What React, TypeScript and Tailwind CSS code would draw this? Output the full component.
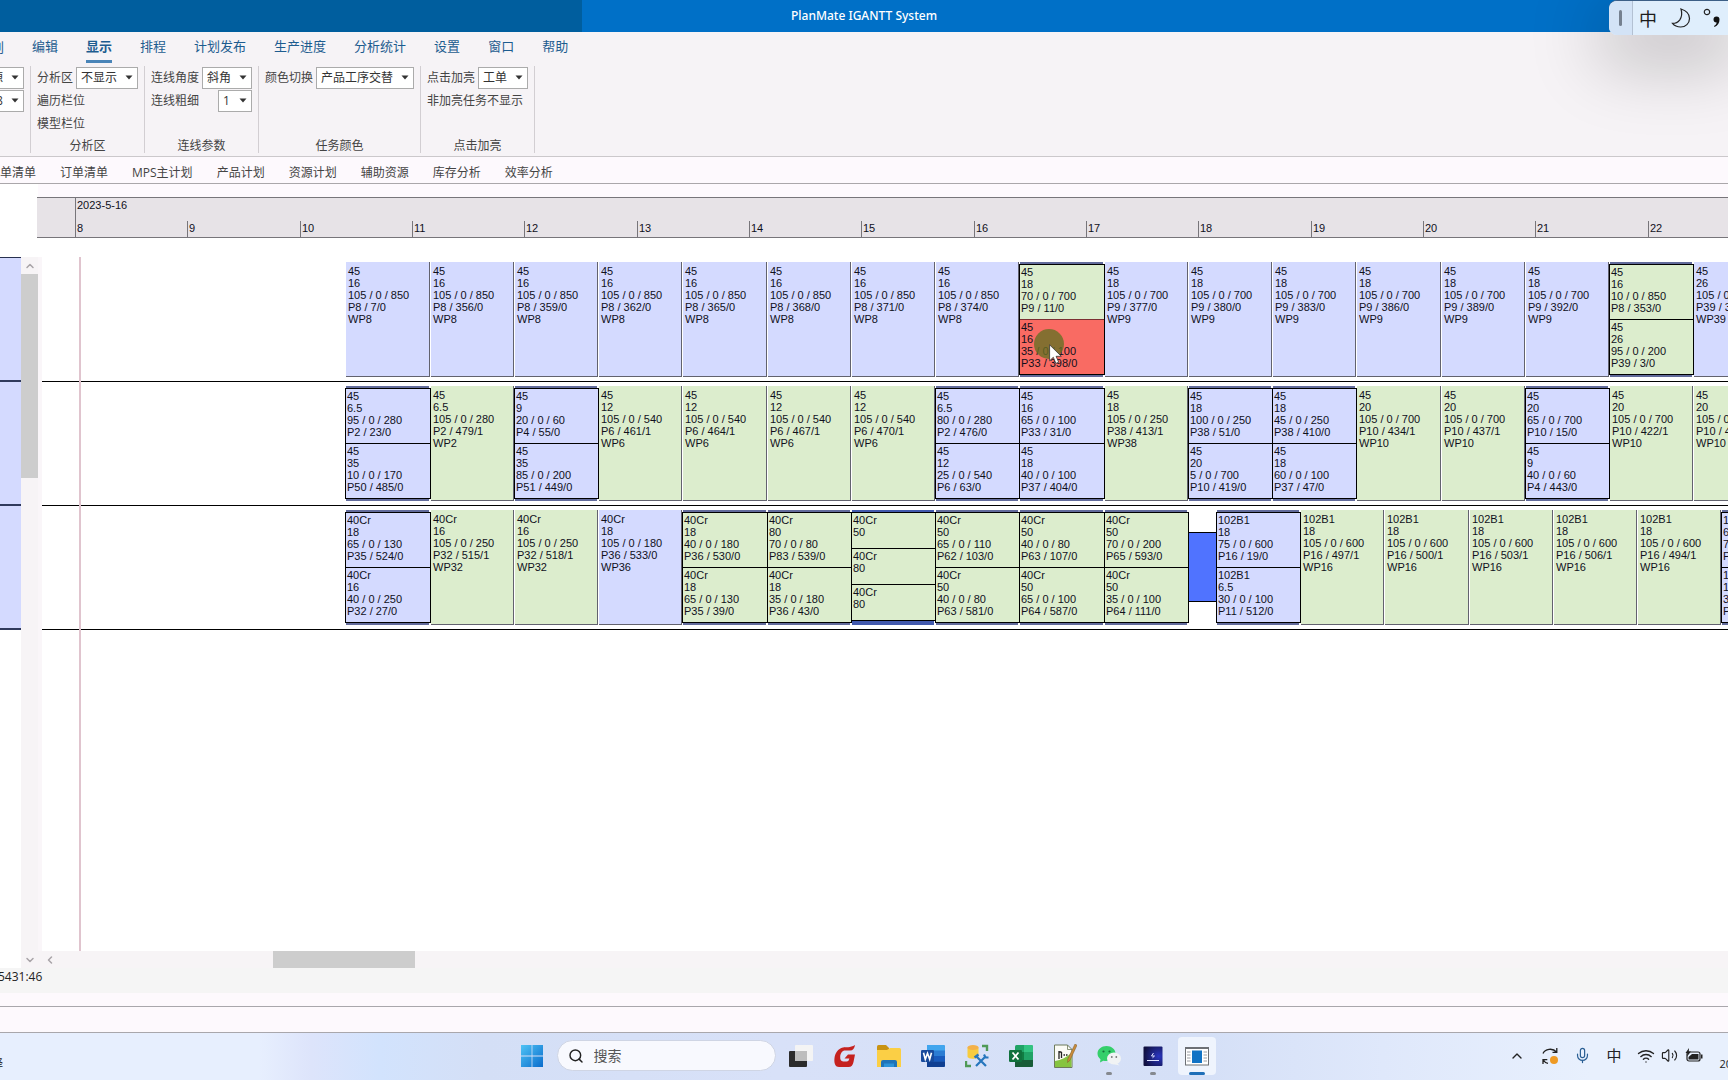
import type { ReactNode } from 'react'
import { ChevronDown, ChevronLeft, ChevronUp, Mic, Search, Volume2, Wifi } from 'lucide-react'

type Tone = 'blue' | 'green' | 'red'
type Lot = { tone: Tone; lines: string[] }
type Slot =
  | { kind: 'single'; lot: Lot }
  | { kind: 'stack'; lots: Lot[] }
  | { kind: 'idle' }

const HOUR_WIDTH = 112.33
const FIRST_TASK_X = 303.4
const SLOT_MINUTES = 45
const IDLE_MINUTES = 15

const toneClass: Record<Tone, string> = {
  blue: 'bg-[#d4daff]',
  green: 'bg-[#dcedcd]',
  red: 'bg-[#f96b63]',
}

const one = (tone: Tone, text: string): Slot => ({ kind: 'single', lot: { tone, lines: text.split('|') } })
const many = (tone: Tone, ...texts: string[]): Slot => ({
  kind: 'stack',
  lots: texts.map((text) => ({ tone, lines: text.split('|') })),
})

const rows: Slot[][] = [
  [
    one('blue', '45|16|105 / 0 / 850|P8 / 7/0|WP8'),
    one('blue', '45|16|105 / 0 / 850|P8 / 356/0|WP8'),
    one('blue', '45|16|105 / 0 / 850|P8 / 359/0|WP8'),
    one('blue', '45|16|105 / 0 / 850|P8 / 362/0|WP8'),
    one('blue', '45|16|105 / 0 / 850|P8 / 365/0|WP8'),
    one('blue', '45|16|105 / 0 / 850|P8 / 368/0|WP8'),
    one('blue', '45|16|105 / 0 / 850|P8 / 371/0|WP8'),
    one('blue', '45|16|105 / 0 / 850|P8 / 374/0|WP8'),
    {
      kind: 'stack',
      lots: [
        { tone: 'green', lines: ['45', '18', '70 / 0 / 700', 'P9 / 11/0'] },
        { tone: 'red', lines: ['45', '16', '35 / 0 / 100', 'P33 / 398/0'] },
      ],
    },
    one('blue', '45|18|105 / 0 / 700|P9 / 377/0|WP9'),
    one('blue', '45|18|105 / 0 / 700|P9 / 380/0|WP9'),
    one('blue', '45|18|105 / 0 / 700|P9 / 383/0|WP9'),
    one('blue', '45|18|105 / 0 / 700|P9 / 386/0|WP9'),
    one('blue', '45|18|105 / 0 / 700|P9 / 389/0|WP9'),
    one('blue', '45|18|105 / 0 / 700|P9 / 392/0|WP9'),
    many('green', '45|16|10 / 0 / 850|P8 / 353/0', '45|26|95 / 0 / 200|P39 / 3/0'),
    one('blue', '45|26|105 / 0 / 200|P39 / 395/0|WP39'),
  ],
  [
    many('blue', '45|6.5|95 / 0 / 280|P2 / 23/0', '45|35|10 / 0 / 170|P50 / 485/0'),
    one('green', '45|6.5|105 / 0 / 280|P2 / 479/1|WP2'),
    many('blue', '45|9|20 / 0 / 60|P4 / 55/0', '45|35|85 / 0 / 200|P51 / 449/0'),
    one('green', '45|12|105 / 0 / 540|P6 / 461/1|WP6'),
    one('green', '45|12|105 / 0 / 540|P6 / 464/1|WP6'),
    one('green', '45|12|105 / 0 / 540|P6 / 467/1|WP6'),
    one('green', '45|12|105 / 0 / 540|P6 / 470/1|WP6'),
    many('blue', '45|6.5|80 / 0 / 280|P2 / 476/0', '45|12|25 / 0 / 540|P6 / 63/0'),
    many('blue', '45|16|65 / 0 / 100|P33 / 31/0', '45|18|40 / 0 / 100|P37 / 404/0'),
    one('green', '45|18|105 / 0 / 250|P38 / 413/1|WP38'),
    many('blue', '45|18|100 / 0 / 250|P38 / 51/0', '45|20|5 / 0 / 700|P10 / 419/0'),
    many('blue', '45|18|45 / 0 / 250|P38 / 410/0', '45|18|60 / 0 / 100|P37 / 47/0'),
    one('green', '45|20|105 / 0 / 700|P10 / 434/1|WP10'),
    one('green', '45|20|105 / 0 / 700|P10 / 437/1|WP10'),
    many('blue', '45|20|65 / 0 / 700|P10 / 15/0', '45|9|40 / 0 / 60|P4 / 443/0'),
    one('green', '45|20|105 / 0 / 700|P10 / 422/1|WP10'),
    one('green', '45|20|105 / 0 / 700|P10 / 425/1|WP10'),
  ],
  [
    many('blue', '40Cr|18|65 / 0 / 130|P35 / 524/0', '40Cr|16|40 / 0 / 250|P32 / 27/0'),
    one('green', '40Cr|16|105 / 0 / 250|P32 / 515/1|WP32'),
    one('green', '40Cr|16|105 / 0 / 250|P32 / 518/1|WP32'),
    one('blue', '40Cr|18|105 / 0 / 180|P36 / 533/0|WP36'),
    many('green', '40Cr|18|40 / 0 / 180|P36 / 530/0', '40Cr|18|65 / 0 / 130|P35 / 39/0'),
    many('green', '40Cr|80|70 / 0 / 80|P83 / 539/0', '40Cr|18|35 / 0 / 180|P36 / 43/0'),
    many('green', '40Cr|50', '40Cr|80', '40Cr|80'),
    many('green', '40Cr|50|65 / 0 / 110|P62 / 103/0', '40Cr|50|40 / 0 / 80|P63 / 581/0'),
    many('green', '40Cr|50|40 / 0 / 80|P63 / 107/0', '40Cr|50|65 / 0 / 100|P64 / 587/0'),
    many('green', '40Cr|50|70 / 0 / 200|P65 / 593/0', '40Cr|50|35 / 0 / 100|P64 / 111/0'),
    { kind: 'idle' },
    many('blue', '102B1|18|75 / 0 / 600|P16 / 19/0', '102B1|6.5|30 / 0 / 100|P11 / 512/0'),
    one('green', '102B1|18|105 / 0 / 600|P16 / 497/1|WP16'),
    one('green', '102B1|18|105 / 0 / 600|P16 / 500/1|WP16'),
    one('green', '102B1|18|105 / 0 / 600|P16 / 503/1|WP16'),
    one('green', '102B1|18|105 / 0 / 600|P16 / 506/1|WP16'),
    one('green', '102B1|18|105 / 0 / 600|P16 / 494/1|WP16'),
    many('blue', '102B1|6.5|75 / 0 / 100|P11 / 509/0', '102B1|18|30 / 0 / 600|P16 / 491/0'),
  ],
]

const menuTabs = ['编辑', '显示', '排程', '计划发布', '生产进度', '分析统计', '设置', '窗口', '帮助']
const viewTabs = ['订单清单', 'MPS主计划', '产品计划', '资源计划', '辅助资源', '库存分析', '效率分析']
const hours = [8, 9, 10, 11, 12, 13, 14, 15, 16, 17, 18, 19, 20, 21, 22]

function Lines({ lines }: { lines: string[] }) {
  return (
    <>
      {lines.map((line, i) => (
        <div key={i} className="h-3 whitespace-nowrap">
          {line}
        </div>
      ))}
    </>
  )
}

function SlotView({ slot, width }: { slot: Slot; width: number }) {
  if (slot.kind === 'idle') {
    return (
      <div className="mt-[22px] h-[70px] shrink-0 border-y border-black bg-[#5073ff]" style={{ width }} />
    )
  }
  if (slot.kind === 'single') {
    return (
      <div className="h-[115px] shrink-0 pl-px" style={{ width }}>
        <div
          className={`h-full overflow-hidden border-r border-b border-[#62626e] pt-[3px] pl-0.5 ${toneClass[slot.lot.tone]}`}
        >
          <Lines lines={slot.lot.lines} />
        </div>
      </div>
    )
  }
  const dense = slot.lots.length > 2
  return (
    <div
      className={`h-[115px] shrink-0 border-x border-white ${dense ? 'bg-[#4259ad]' : 'bg-[#626b9b]'}`}
      style={{ width }}
    >
      <div className="relative z-10 -mr-0.5 -ml-px mt-0.5 border-x border-b border-black">
        {slot.lots.map((lot, i) => (
          <div
            key={i}
            className={`overflow-hidden border-t pt-px pl-px ${dense ? 'h-9' : 'h-[55px]'} ${
              lot.tone === 'red' ? 'border-[#7c2f33]' : 'border-black'
            } ${toneClass[lot.tone]}`}
          >
            <Lines lines={lot.lines} />
          </div>
        ))}
      </div>
    </div>
  )
}

function GanttRow({ slots }: { slots: Slot[] }) {
  let x = FIRST_TASK_X
  return (
    <div className="flex h-[124px] overflow-hidden border-b border-black pt-1">
      <div className="shrink-0" style={{ width: Math.round(x) }} />
      {slots.map((slot, i) => {
        const start = x
        x += ((slot.kind === 'idle' ? IDLE_MINUTES : SLOT_MINUTES) / 60) * HOUR_WIDTH
        return <SlotView key={i} slot={slot} width={Math.round(x) - Math.round(start)} />
      })}
    </div>
  )
}

function Combo({ id, value, className, label }: { id: string; value: string; className: string; label?: string }) {
  return (
    <span className={`flex h-[22px] shrink-0 items-center border border-[#ababab] bg-white ${className}`}>
      <select
        id={id}
        aria-label={label}
        defaultValue={value}
        className="h-full min-w-0 flex-1 appearance-none bg-transparent pl-1 text-[#333] outline-none"
      >
        <option>{value}</option>
      </select>
      <svg viewBox="0 0 8 5" className="mr-1 h-[5px] w-2 shrink-0" aria-hidden="true">
        <path d="M0.5 0.5h7L4 4.5z" fill="#333" />
      </svg>
    </span>
  )
}

function Group({ title, children }: { title: string; children: ReactNode }) {
  return (
    <section className="flex h-[87px] shrink-0 flex-col border-r border-[#d2ced2] px-1.5">
      {children}
      <h2 className="mt-auto h-[14px] text-center leading-[14px]">{title}</h2>
    </section>
  )
}

function Field({ id, text, value, className }: { id: string; text: string; value: string; className: string }) {
  return (
    <div className="flex h-[23px] items-center justify-between gap-[3px]">
      <label htmlFor={id}>{text}</label>
      <Combo id={id} value={value} className={className} />
    </div>
  )
}

function ToggleText({ text }: { text: string }) {
  return (
    <button type="button" className="flex h-[23px] items-center whitespace-nowrap">
      {text}
    </button>
  )
}

function Ribbon() {
  return (
    <header className="shrink-0 overflow-hidden border-b border-[#cbc8cb] bg-[#f6f3f6]">
      <nav className="flex h-[34px] items-start gap-7 text-[13px] text-[#1d5c8f]">
        <button type="button" className="-ml-[9px] h-[31px] shrink-0">
          划
        </button>
        {menuTabs.map((tab) => (
          <button
            key={tab}
            type="button"
            className={`h-[31px] shrink-0 border-b-[3px] pt-[2px] ${
              tab === '显示' ? 'border-[#4a85b8] font-bold' : 'border-transparent'
            }`}
          >
            {tab}
          </button>
        ))}
      </nav>
      <div className="flex h-[90px] text-xs text-[#444]">
        <div className="flex h-[87px] w-[31px] shrink-0 flex-col items-end overflow-hidden border-r border-[#d2ced2] pr-1.5">
          <div className="flex h-[23px] items-center">
            <Combo id="source" label="资源" value="资源" className="w-[50px]" />
          </div>
          <div className="flex h-[23px] items-center">
            <Combo id="count" label="数量" value="8" className="w-[33px]" />
          </div>
        </div>
        <Group title="分析区">
          <Field id="area" text="分析区" value="不显示" className="w-[62px]" />
          <ToggleText text="遍历栏位" />
          <ToggleText text="模型栏位" />
        </Group>
        <Group title="连线参数">
          <Field id="angle" text="连线角度" value="斜角" className="w-[50px]" />
          <Field id="weight" text="连线粗细" value="1" className="w-[34px]" />
        </Group>
        <Group title="任务颜色">
          <Field id="color" text="颜色切换" value="产品工序交替" className="w-[98px]" />
        </Group>
        <Group title="点击加亮">
          <Field id="highlight" text="点击加亮" value="工单" className="w-[50px]" />
          <ToggleText text="非加亮任务不显示" />
        </Group>
      </div>
    </header>
  )
}

function ResourceColumn() {
  return (
    <aside className="flex w-[38px] shrink-0 bg-white pt-[73px]">
      <div className="flex-1">
        <div className="border-t border-[#28304f]">
          {rows.map((_, i) => (
            <div key={i} className="h-[124px] border-b-2 border-[#303a5c] bg-[#d4daff]" />
          ))}
        </div>
      </div>
      <div className="flex w-[17px] flex-col bg-[#f7f4f6] text-[#a8a4a8]">
        <button type="button" aria-label="向上滚动" className="flex h-[17px] items-center justify-center">
          <ChevronUp size={12} strokeWidth={3} />
        </button>
        <div className="h-[204px] bg-[#cdcdcd]" />
        <button type="button" aria-label="向下滚动" className="mt-auto flex h-[17px] items-center justify-center">
          <ChevronDown size={12} strokeWidth={3} />
        </button>
      </div>
    </aside>
  )
}

function TimeScale() {
  return (
    <div className="-ml-px mt-[13px] flex h-[41px] shrink-0 overflow-hidden border-y border-[#77757a] bg-[#e7e3e7]">
      <div className="w-[38px] shrink-0" />
      {hours.map((hour, i) => (
        <div
          key={hour}
          className="flex shrink-0 flex-col justify-end"
          style={{ width: Math.round((i + 1) * HOUR_WIDTH) - Math.round(i * HOUR_WIDTH) }}
        >
          {i === 0 && (
            <div className="flex-1 border-l border-[#77757a] pt-px pl-px leading-3 whitespace-nowrap">2023-5-16</div>
          )}
          <div className="h-4 border-l border-[#77757a] pl-px leading-[14px]">{hour}</div>
        </div>
      ))}
    </div>
  )
}

function Chart() {
  return (
    <div className="flex min-w-0 flex-1 flex-col font-['Liberation_Sans',sans-serif] text-[11px] leading-3 text-[#10101c]">
      <TimeScale />
      <div className="flex min-h-0 flex-1 bg-white pt-[19px]">
        <div className="w-1 shrink-0 bg-[#faf6f9]" />
        <div className="relative flex min-w-0 flex-1 flex-col overflow-hidden pt-px">
          <div>
            {rows.map((slots, i) => (
              <GanttRow key={i} slots={slots} />
            ))}
          </div>
          <div className="absolute inset-y-0 left-[37px] w-0.5 bg-[#e0c4ce]" />
          <div className="absolute top-[72px] left-[992px] z-20 size-[30px] rounded-full bg-[#667024]/80" />
          <svg viewBox="0 0 14 22" className="absolute top-[87px] left-[1007px] z-20 h-[22px] w-[14px]" aria-hidden="true">
            <path d="M0.6 0.8v16l3.7-3.5 2.6 6.1 2.8-1.2-2.6-5.9h5.2z" fill="#fff" stroke="#333" strokeWidth="0.8" />
          </svg>
        </div>
      </div>
      <div className="flex h-[17px] shrink-0 items-center bg-[#f7f4f6] pl-1 text-[#a8a4a8]">
        <button type="button" aria-label="向左滚动" className="flex w-4 items-center justify-center">
          <ChevronLeft size={12} strokeWidth={3} />
        </button>
        <div className="ml-[215px] h-full w-[142px] bg-[#cdcdcd]" />
      </div>
    </div>
  )
}

function InputBar() {
  return (
    <div className="absolute top-0 right-0 z-30 flex h-[35px] w-[119px] items-center rounded-l-lg border-t border-[#3d5f86] bg-[#dfeefc] text-[#1c1c1c] shadow-[0_18px_70px_12px_rgba(0,0,0,0.22)]">
      <div className="flex h-full w-6 shrink-0 items-center justify-center rounded-l-lg border-r border-[#b3c1d3] bg-[#d3e3f6]">
        <span className="h-4 w-[3px] rounded-sm bg-[#75808f]" />
      </div>
      <button type="button" className="ml-[5px] w-5 pt-0.5 text-lg leading-none">
        中
      </button>
      <svg viewBox="0 0 20 20" className="ml-[13px] size-5 shrink-0" fill="none" stroke="#222" strokeWidth="1.2">
        <path d="M10 1c5 1.500 8.500 5 8.500 9.500 0 5-4 8.500-8.800 8.500-3.400 0-6.400-1.300-8.200-3.600 3 0 5.500-1.200 7.300-3.600C11 8.700 11 4.500 10 1z" />
      </svg>
      <svg viewBox="0 0 18 20" className="ml-3 h-5 w-[18px] shrink-0">
        <circle cx="4" cy="4" r="2.700" fill="none" stroke="#222" strokeWidth="1.200" />
        <path d="M10.500 11.500a3 3 0 1 1 6 0c0 3.500-1.700 6.300-5 7.500l-.5-1c1.700-.9 2.500-2 2.700-3.500-1.800.2-3.200-1.200-3.200-3z" fill="#111" />
      </svg>
    </div>
  )
}

function AppIcon({ name, children, state }: { name: string; children: ReactNode; state?: 'running' | 'active' }) {
  return (
    <button
      type="button"
      aria-label={name}
      className={`relative mx-[3px] flex h-[38px] w-[38px] items-center justify-center rounded ${
        state === 'active' ? 'bg-[#eff4fd]' : ''
      }`}
    >
      <svg viewBox="0 0 24 24" className="size-6">
        {children}
      </svg>
      {state && (
        <span
          className={`absolute bottom-0 h-[3px] rounded-full ${
            state === 'active' ? 'w-4 bg-[#1f6fb8]' : 'w-1.5 bg-[#85898f]'
          }`}
        />
      )}
    </button>
  )
}

function Taskbar() {
  return (
    <footer className="flex h-[47px] shrink-0 items-center overflow-hidden bg-[linear-gradient(90deg,#e7effe_0%,#e7effe_15%,#dde4fb_18%,#d2e3fd_22%,#d4dff6_28%,#d8e1f8_45%,#d5e0f7_70%,#dfe8fb_80%,#e8f0fd_92%)] pb-0.5 text-[#222]">
      <div className="flex-1 text-[11px]">
        <span className="-ml-2 block pt-4 leading-none">择</span>
      </div>
      <div className="flex items-center">
        <AppIcon name="开始">
          <defs>
            <linearGradient id="win" x1="0" y1="0" x2="1" y2="1">
              <stop offset="0" stopColor="#4fc3f5" />
              <stop offset="1" stopColor="#0a6ccc" />
            </linearGradient>
          </defs>
          <path d="M1 1h10.600v10.600H1zM12.400 1H23v10.600H12.400zM1 12.400h10.600V23H1zM12.400 12.400H23V23H12.400z" fill="url(#win)" />
        </AppIcon>
        <label className="mx-[3px] flex h-[31px] w-[219px] items-center rounded-full border border-[#cfd5e4] bg-[#f8f9fe] pl-2.5">
          <Search size={16} strokeWidth={2.2} className="shrink-0" />
          <input
            type="text"
            aria-label="搜索"
            placeholder="搜索"
            className="ml-2.5 min-w-0 flex-1 bg-transparent text-sm outline-none placeholder:text-[#555]"
          />
        </label>
        <AppIcon name="任务视图">
          <rect x="0" y="7" width="18" height="16" rx="1" fill="#2b2b2b" />
          <rect x="6" y="1" width="18" height="16" rx="1" fill="#f4f4f4" />
          <rect x="6" y="7" width="12" height="10" fill="#bdbdbd" />
        </AppIcon>
        <AppIcon name="G">
          <path
            d="M22 1c-.5 3.500-2 5.500-5 5.500h-5c-2.700 0-4.500 2.700-4.800 6-.2 2.800.6 5 3 5h3.500c1.300 0 2-.7 2.300-2l.3-1h-4.800l3.500-4H22l-1.500 7.500c-.6 3-2 5-5 5H6c-3.500 0-5-3.500-4.600-8C1.900 9 5 4.500 10 3.500c3-.6 7 .5 12-2.500z"
            fill="#c5221f"
          />
        </AppIcon>
        <AppIcon name="文件资源管理器">
          <path d="M0 2.500Q0 1 1.500 1H9l3 3v5H0z" fill="#c99312" />
          <path d="M0 6h10l3-2h9.500Q24 4 24 5.500V23H0z" fill="#fbcf45" />
          <path d="M4 23v-5q0-2 2-2h12q2 0 2 2v5z" fill="#1e73b8" />
          <path d="M7 19.500h10V23H7z" fill="#2b93d8" />
        </AppIcon>
        <AppIcon name="Word">
          <rect x="6" y="1" width="18" height="22" rx="1.500" fill="#2b7cd3" />
          <path d="M6 1h16.500Q24 1 24 2.500V6.500H6z" fill="#41a5ee" />
          <path d="M6 12h18v5.500H6z" fill="#185abd" />
          <path d="M6 17.500h18v4q0 1.500-1.500 1.500H6z" fill="#103f91" />
          <rect x="0" y="6" width="13" height="12" rx="1.200" fill="#174a9c" />
          <path d="M2.500 8.800l1.800 6.500 2.200-6 2.200 6 1.800-6.500" fill="none" stroke="#fff" strokeWidth="1.600" />
        </AppIcon>
        <AppIcon name="数据库工具">
          <path d="M2.500 3.500v9c0 3 11 3 11 0v-9z" fill="#f7cc3e" />
          <ellipse cx="8" cy="3.500" rx="5.500" ry="2.500" fill="#f3b14a" />
          <path d="M17 2h5v5M1 17v5h5" fill="none" stroke="#4f9a57" strokeWidth="2.400" />
          <path d="M11 12l10 10M21 12L11 22M9.500 13.500l4-3M19 10.500l1.500 3 3 0" fill="none" stroke="#2676bd" strokeWidth="2.200" />
        </AppIcon>
        <AppIcon name="Excel">
          <rect x="6" y="1" width="18" height="22" rx="1.500" fill="#21a366" />
          <path d="M15 1h7.500Q24 1 24 2.500V8h-9z" fill="#33c481" />
          <path d="M6 8h9v8H6z" fill="#107c41" />
          <path d="M6 16h18v5.500q0 1.500-1.500 1.500H6z" fill="#185c37" />
          <rect x="0" y="6" width="13" height="12" rx="1.200" fill="#10713c" />
          <path d="M3.500 8.500l6 7M9.500 8.500l-6 7" fill="none" stroke="#fff" strokeWidth="1.800" />
        </AppIcon>
        <AppIcon name="记事本">
          <path d="M1.500 1h13l4.500 4.500V23.500H1.500z" fill="#fbfbf6" stroke="#6d7a5a" />
          <path d="M2 17c6-1 12-4 16.500-8v14H2z" fill="#86c440" />
          <path d="M14.500 1v4.500H19" fill="none" stroke="#6d7a5a" strokeWidth="0.800" />
          <path d="M6 7v8M8.500 8v6M6 8h2.500M10.500 11h1.500M13 11h1.500" stroke="#222" strokeWidth="1.300" fill="none" />
          <path d="M22 0l2 1.200-7 15-2.500 2.300.3-3.500z" fill="#c98b3a" stroke="#7c5a2a" strokeWidth="0.500" />
        </AppIcon>
        <AppIcon name="微信" state="running">
          <path d="M9.500 2C4.500 2 .5 5.200.5 9.500c0 2.500 1.200 4.400 3 5.700L3 18.500l3.300-1.800c1 .3 2 .4 3.200.4 5 0 9-3.200 9-7.500S14.500 2 9.500 2z" fill="#35cf6b" />
          <ellipse cx="17" cy="14.500" rx="7" ry="6" fill="#f1f3f4" />
          <path d="M20 19l2.500 2.500-5-1.200z" fill="#f1f3f4" />
          <circle cx="6.500" cy="7.500" r="1.100" fill="#15703a" />
          <circle cx="12.500" cy="7.500" r="1.100" fill="#15703a" />
          <circle cx="14.800" cy="13" r="0.900" fill="#777" />
          <circle cx="19.300" cy="13" r="0.900" fill="#777" />
        </AppIcon>
        <AppIcon name="终端" state="running">
          <defs>
            <radialGradient id="night" cx="0.800" cy="0.500" r="0.800">
              <stop offset="0" stopColor="#2a36c0" />
              <stop offset="1" stopColor="#10103f" />
            </radialGradient>
          </defs>
          <rect x="2.500" y="2.500" width="19" height="19.500" rx="1" fill="url(#night)" />
          <path d="M12.500 9l-2 3h3l-2 1.800M6 16.500h12" stroke="#dfe4ff" strokeWidth="1" fill="none" />
        </AppIcon>
        <AppIcon name="PlanMate" state="active">
          <rect x="0.500" y="3.500" width="23" height="17.500" fill="#fff" stroke="#6d7075" />
          <path d="M0.500 4.500h23" stroke="#6d7075" />
          <rect x="7" y="6.500" width="10" height="12.500" fill="#1173c5" />
          <path d="M2 8h3.500M2 11h3.500M2 14h3.500M2 17h3.500M18.500 8H22M18.500 11H22M18.500 14H22M18.500 17H22" stroke="#9a9da2" />
        </AppIcon>
      </div>
      <div className="flex flex-1 items-center justify-end">
        <ChevronUp size={16} strokeWidth={2} className="mr-4" />
        <svg viewBox="0 0 18 18" className="mr-[15px] size-[18px]" fill="none" stroke="#222" strokeWidth="1.300">
          <path d="M2 6.500C4 2 11.500 .5 15.500 5M15.800 1v4.300h-4.300M2 17v-4.300h4.300M2.300 13c1 1.800 2.700 3 4.700 3.400" />
          <circle cx="13" cy="13" r="4" fill="#ee9a24" stroke="none" />
        </svg>
        <Mic size={17} strokeWidth={1.7} className="mr-[15px] text-[#2a5f94]" />
        <button type="button" className="mr-4 text-[15px] leading-none">
          中
        </button>
        <Wifi size={18} strokeWidth={1.8} className="mr-1.5" />
        <Volume2 size={17} strokeWidth={1.6} className="mr-[7px]" />
        <svg viewBox="0 0 18 16" className="mr-4 h-4 w-[18px]">
          <rect x="2" y="4" width="13" height="9" rx="2" fill="none" stroke="#222" strokeWidth="1.200" />
          <path d="M7 6h6.500v5.500h-10V9zM16 6.500h1.500v4H16z" fill="#222" />
          <path d="M4 0L.5 5h2L2 8.500 6 3.500H3.800z" fill="#222" />
        </svg>
        <span className="-mr-1 pt-4 text-[11px] leading-none">20</span>
      </div>
    </footer>
  )
}

export default function App() {
  return (
    <div className="relative flex h-screen flex-col overflow-hidden bg-[#fdf9fd] font-['Open_Sans','Noto_Sans_CJK_SC',sans-serif]">
      <div className="flex h-8 shrink-0 items-center justify-center bg-[linear-gradient(90deg,#005e9e_0_582px,#0070c7_582px)] font-['Noto_Sans',sans-serif] text-xs font-medium text-white">
        <h1>PlanMate IGANTT System</h1>
      </div>
      <InputBar />
      <Ribbon />
      <nav className="flex h-[27px] shrink-0 items-center gap-6 border-b border-[#aaa7aa] pt-1.5 text-xs text-[#444]">
        <button type="button" className="-ml-3 shrink-0">
          工单清单
        </button>
        {viewTabs.map((tab) => (
          <button key={tab} type="button" className="shrink-0">
            {tab}
          </button>
        ))}
      </nav>
      <main className="flex min-h-0 flex-1">
        <ResourceColumn />
        <Chart />
      </main>
      <div className="h-[25px] shrink-0 overflow-hidden bg-[#f5f5f5] text-xs leading-[17px] text-[#222]">
        <div className="-ml-0.5">5431:46</div>
      </div>
      <div className="h-[13px] shrink-0" />
      <div className="h-[27px] shrink-0 border-y border-[#a9a7ac]" />
      <Taskbar />
    </div>
  )
}
